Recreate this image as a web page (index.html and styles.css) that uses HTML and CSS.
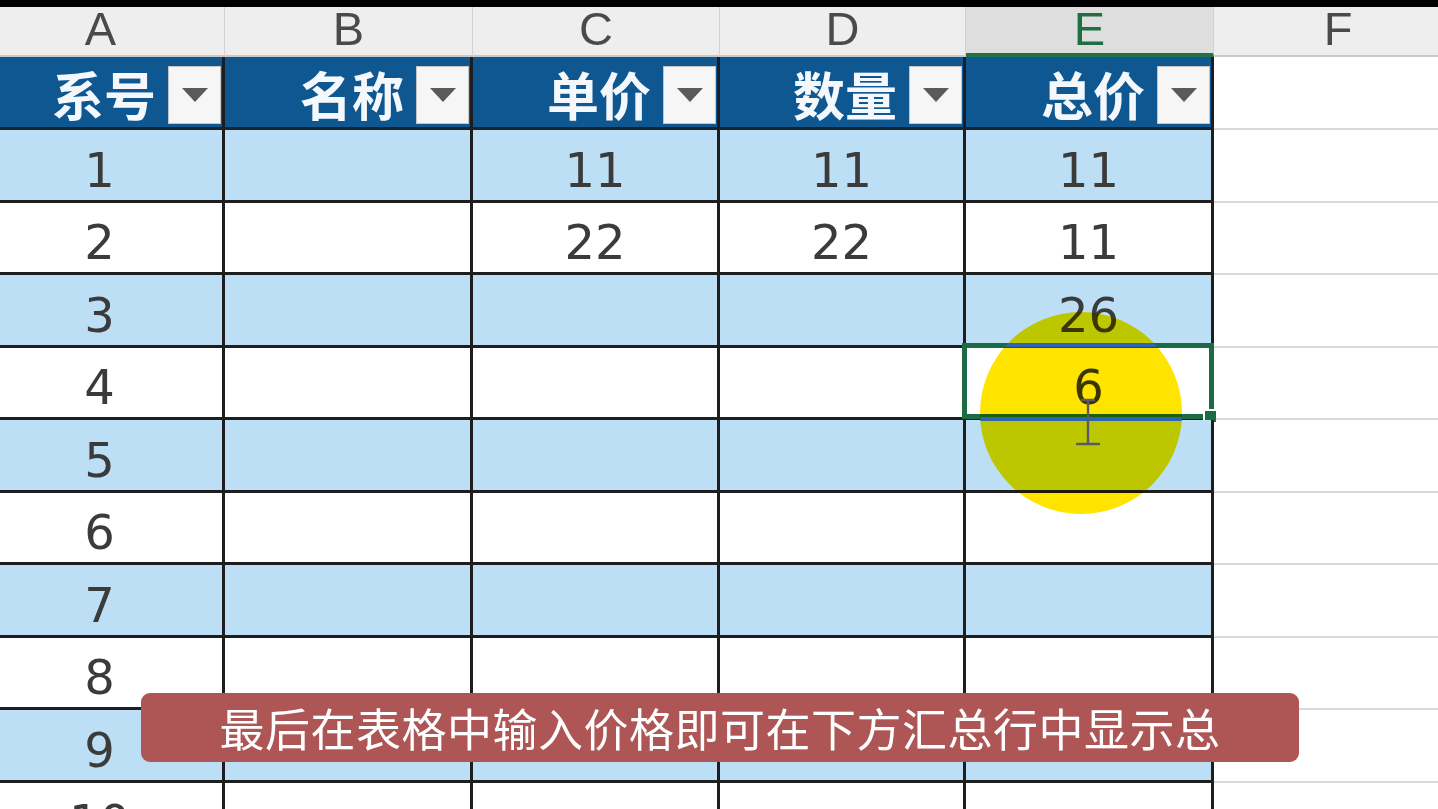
FILE: index.html
```html
<!DOCTYPE html>
<html lang="zh-CN">
<head>
<meta charset="utf-8">
<title>表格</title>
<link rel="stylesheet" href="styles.css">
</head>
<body>
<div class="topbar"></div>
<div class="sheet">
  <div class="ch">A</div><div class="ch">B</div><div class="ch">C</div><div class="ch">D</div><div class="ch ch-sel">E</div><div class="ch ch-last">F</div>

  <div class="th"><span class="th-text">系号</span><span class="filter"><i></i></span></div>
  <div class="th"><span class="th-text">名称</span><span class="filter"><i></i></span></div>
  <div class="th"><span class="th-text">单价</span><span class="filter"><i></i></span></div>
  <div class="th"><span class="th-text">数量</span><span class="filter"><i></i></span></div>
  <div class="th"><span class="th-text">总价</span><span class="filter"><i></i></span></div>
  <div class="fc"></div>

  <div class="td band">1</div><div class="td band"></div><div class="td band">11</div><div class="td band">11</div><div class="td band">11</div><div class="fc"></div>
  <div class="td">2</div><div class="td"></div><div class="td">22</div><div class="td">22</div><div class="td">11</div><div class="fc"></div>
  <div class="td band">3</div><div class="td band"></div><div class="td band"></div><div class="td band"></div><div class="td band">26</div><div class="fc"></div>
  <div class="td">4</div><div class="td"></div><div class="td"></div><div class="td"></div><div class="td cell-active">6<span class="selbox"></span><span class="handle"></span></div><div class="fc"></div>
  <div class="td band">5</div><div class="td band"></div><div class="td band"></div><div class="td band"></div><div class="td band"></div><div class="fc"></div>
  <div class="td">6</div><div class="td"></div><div class="td"></div><div class="td"></div><div class="td"></div><div class="fc"></div>
  <div class="td band">7</div><div class="td band"></div><div class="td band"></div><div class="td band"></div><div class="td band"></div><div class="fc"></div>
  <div class="td">8</div><div class="td"></div><div class="td"></div><div class="td"></div><div class="td"></div><div class="fc"></div>
  <div class="td band">9</div><div class="td band"></div><div class="td band"></div><div class="td band"></div><div class="td band"></div><div class="fc"></div>
  <div class="td">10</div><div class="td"></div><div class="td"></div><div class="td"></div><div class="td"></div><div class="fc"></div>
</div>

<div class="spot"></div>
<div class="spot-lines"><span class="sl sl-top"></span><span class="sl sl-bot"></span></div>
<svg class="ibeam" width="30" height="50" viewBox="0 0 30 50">
  <path d="M9 2 h12 M15 2 v44 M4 46 h22" stroke="#5a5a6a" stroke-width="2.4" fill="none" stroke-linecap="round"/>
</svg>

<div class="caption">最后在表格中输入价格即可在下方汇总行中显示总</div>
</body>
</html>
```

FILE: styles.css
```css
html, body {
  margin: 0;
  padding: 0;
  background: #ffffff;
  overflow: hidden;
  width: 1438px;
  height: 809px;
}

.topbar {
  height: 7px;
  background: #000;
}

.sheet {
  display: grid;
  grid-template-columns: 248px 248px 247px 246px 248px 248px;
  grid-template-rows: 50px 73px repeat(10, 72.5px);
  margin-left: -23px;
}

.ch {
  box-sizing: border-box;
  background: #eeeeee;
  border-right: 1px solid #d2d2d2;
  border-bottom: 2px solid #c9c9c9;
  display: flex;
  justify-content: center;
  align-items: flex-start;
  font-family: "Liberation Sans", Arial, sans-serif;
  font-size: 47px;
  line-height: 43px;
  color: #4a4a4a;
}

.ch-sel {
  background: #dedede;
  color: #1f6f43;
  border-bottom: 4px solid #217346;
}

.ch-last {
  border-right: none;
}

.th {
  box-sizing: border-box;
  background: #0f5790;
  border-right: 3px solid #1b1d24;
  border-bottom: 3px solid #1a2230;
  display: flex;
  justify-content: flex-end;
  align-items: flex-end;
  padding: 0 1px 3px 0;
  gap: 12px;
}

.th-text {
  align-self: center;
  font-family: "Noto Sans CJK SC", "Noto Sans", sans-serif;
  font-weight: 700;
  font-size: 52px;
  line-height: 1;
  color: #f4f8fc;
  padding-top: 6px;
}

.filter {
  box-sizing: border-box;
  width: 53px;
  height: 58px;
  background: #f6f6f6;
  border: 1px solid #c4c4c4;
  display: flex;
  align-items: center;
  justify-content: center;
}

.filter i {
  width: 0;
  height: 0;
  border-left: 13px solid transparent;
  border-right: 13px solid transparent;
  border-top: 14px solid #5a5a5a;
}

.td {
  box-sizing: border-box;
  position: relative;
  background: #ffffff;
  border-right: 3px solid #1e1e1e;
  border-bottom: 3px solid #1e1e1e;
  display: flex;
  justify-content: center;
  align-items: flex-end;
  padding-bottom: 6px;
  font-family: "DejaVu Sans", sans-serif;
  font-size: 48px;
  line-height: 48px;
  color: #3b3b3b;
}

.td.band {
  background: #bcdff6;
}

.fc {
  box-sizing: border-box;
  background: #ffffff;
  border-bottom: 2px solid #dadada;
}

.selbox {
  position: absolute;
  left: -4px;
  top: -5px;
  right: -3px;
  bottom: -2px;
  border: 5px solid #1d6b45;
  pointer-events: none;
}

.handle {
  position: absolute;
  right: -5px;
  bottom: -5px;
  width: 11px;
  height: 11px;
  background: #1d6b45;
  border-left: 2px solid #ffffff;
  border-top: 2px solid #ffffff;
}

.spot {
  position: absolute;
  left: 980px;
  top: 312px;
  width: 202px;
  height: 202px;
  border-radius: 50%;
  background: #ffe400;
  mix-blend-mode: multiply;
}

.spot-lines {
  position: absolute;
  left: 980px;
  top: 312px;
  width: 202px;
  height: 202px;
  border-radius: 50%;
  overflow: hidden;
}

.sl {
  position: absolute;
  left: 0;
  right: 0;
  height: 4px;
  background: #2d62b8;
}

.sl-top {
  top: 31px;
}

.sl-bot {
  top: 105px;
}

.ibeam {
  position: absolute;
  left: 1073px;
  top: 398px;
}

.caption {
  position: absolute;
  left: 141px;
  top: 693px;
  width: 1158px;
  height: 69px;
  box-sizing: border-box;
  border-radius: 9px;
  background: #ad5655;
  display: flex;
  align-items: center;
  justify-content: center;
  font-family: "Noto Sans CJK SC", "Noto Sans", sans-serif;
  font-size: 45px;
  letter-spacing: 0.5px;
  line-height: 1;
  color: #ffffff;
}
```
